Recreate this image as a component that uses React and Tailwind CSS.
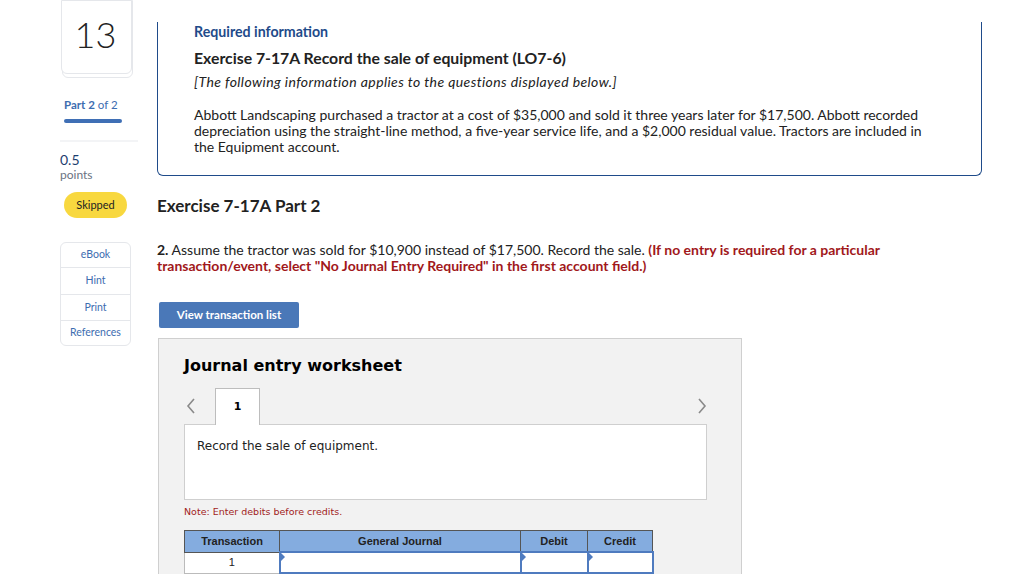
import React from 'react';

const sans = { fontFamily: 'Lato, "Open Sans", Arial, sans-serif' };
const verdana = { fontFamily: '"DejaVu Sans", Verdana, sans-serif' };

const Sidebar = () => (
  <div className="w-[78px] shrink-0 ml-[60px] flex flex-col" style={sans}>
    {/* question number card */}
    <div className="relative h-[76px] w-[72px]">
      <div className="absolute left-[2px] right-[-1px] top-0 h-[78px] rounded-b-md border border-gray-200 bg-white"></div>
      <div className="absolute left-[1px] right-0 top-0 h-[74px] rounded-b-md border border-gray-200 bg-white flex items-center justify-center">
        <span className="text-[36px] font-light text-[#222] leading-none mt-[-6px] mr-[2px]">13</span>
      </div>
    </div>
    <div className="mt-[20px] pl-[4px] text-[11.5px] text-[#3d6db0]">
      <span className="font-bold">Part 2</span> of 2
    </div>
    <div className="mt-[6px] ml-[4px] h-[4px] w-[58px] rounded-full bg-[#3f6fb5]"></div>
    <div className="mt-[17px] h-[2px] w-[78px] bg-gray-100"></div>
    <div className="mt-[11px] text-[14px] leading-[14px] text-[#1d3e70]">0.5</div>
    <div className="text-[12px] leading-[15px] text-gray-500">points</div>
    <div className="mt-[10px] ml-[4px] w-[63px] h-[26px] rounded-full bg-[#f8d83f] flex items-center justify-center text-[11px] text-[#222]">
      Skipped
    </div>
    <div className="mt-[24px] w-[71px] rounded-md border border-gray-200 text-[10.5px] text-[#3d6db0] flex flex-col">
      <div className="h-[25px] flex items-center justify-center border-b border-gray-200">eBook</div>
      <div className="h-[27px] flex items-center justify-center border-b border-gray-200">Hint</div>
      <div className="h-[26px] flex items-center justify-center border-b border-gray-200">Print</div>
      <div className="h-[24px] flex items-center justify-center">References</div>
    </div>
  </div>
);

const Chevron = ({ dir }) => (
  <svg width="10" height="16" viewBox="0 0 10 16" fill="none" stroke="#8a8a8a" strokeWidth="1.6">
    {dir === 'left' ? <path d="M8 1 L2 8 L8 15" /> : <path d="M2 1 L8 8 L2 15" />}
  </svg>
);

const Arrow = () => (
  <span className="absolute left-0 top-0 w-0 h-0 border-t-[4px] border-t-transparent border-b-[4px] border-b-transparent border-l-[4px] border-l-[#4f7bbf]"></span>
);

const Worksheet = () => (
  <div className="mt-[10px] ml-[1px] w-[584px] h-[240px] bg-[#f2f2f2] border border-[#cfcfcf] border-b-0 pl-[25px] pr-[34px] pt-[17px]" style={verdana}>
    <h2 className="text-[16px] font-bold text-black leading-[20px]">Journal entry worksheet</h2>
    <div className="mt-[12px] flex items-end h-[36px]">
      <div className="w-[31px] h-full flex items-center pl-[2px]"><Chevron dir="left" /></div>
      <div className="w-[45px] h-[37px] bg-white border border-[#bdbdbd] border-b-0 flex items-center justify-center text-[11px] font-bold relative z-10 mb-[-1px]">1</div>
      <div className="flex-1 h-full flex items-center justify-end"><Chevron dir="right" /></div>
    </div>
    <div className="w-[523px] h-[76px] bg-white border border-[#cfcfcf] px-[12px] pt-[12px] text-[12px] text-[#222]">
      Record the sale of equipment.
    </div>
    <div className="mt-[5px] text-[9.5px] text-[#a12222]">Note: Enter debits before credits.</div>
    <table className="mt-[10px] border-collapse text-[11px]" style={{ fontFamily: 'Arial, "Liberation Sans", sans-serif' }}>
      <thead>
        <tr className="bg-[#84acdf] h-[22px]">
          <th className="w-[95px] border border-[#555] font-bold text-[#222]">Transaction</th>
          <th className="w-[241px] border border-[#555] font-bold text-[#222]">General Journal</th>
          <th className="w-[67px] border border-[#555] font-bold text-[#222]">Debit</th>
          <th className="w-[65px] border border-[#555] font-bold text-[#222]">Credit</th>
        </tr>
      </thead>
      <tbody>
        <tr className="h-[21px] bg-white">
          <td className="border border-[#bbb] text-center text-[#222]">1</td>
          <td className="border-2 border-[#4f7bbf] relative"><Arrow /></td>
          <td className="border-2 border-[#4f7bbf] relative"><Arrow /></td>
          <td className="border-2 border-[#4f7bbf] relative"><Arrow /></td>
        </tr>
      </tbody>
    </table>
  </div>
);

export default function App() {
  return (
    <div className="w-[1024px] h-[574px] overflow-hidden bg-white flex">
      <Sidebar />
      <div className="ml-[19px] flex flex-col" style={sans}>
        {/* required information box */}
        <div className="mt-[22px] w-[825px] h-[157px] border border-t-0 border-[#1f4b8a] rounded-b-md pl-[36px] pr-[40px] pt-[1px]">
          <div className="text-[14.2px] font-bold text-[#1f4b8a] leading-[18px]">Required information</div>
          <div className="mt-[7px] text-[15.8px] font-bold text-[#222] leading-[20px]">Exercise 7-17A Record the sale of equipment (LO7-6)</div>
          <div className="mt-[5px] text-[14px] italic tracking-[0.4px] text-[#222] leading-[18px]">[The following information applies to the questions displayed below.]</div>
          <p className="mt-[16px] text-[14px] text-[#222] leading-[16px]">
            Abbott Landscaping purchased a tractor at a cost of $35,000 and sold it three years later for $17,500. Abbott recorded depreciation using the straight-line method, a five-year service life, and a $2,000 residual value. Tractors are included in the Equipment account.
          </p>
        </div>
        <h1 className="mt-[20px] text-[17px] font-bold text-[#222] leading-[20px]">Exercise 7-17A Part 2</h1>
        <p className="mt-[26px] text-[14px] leading-[16px] text-[#222] w-[760px]">
          <span className="font-bold">2.</span> Assume the tractor was sold for $10,900 instead of $17,500. Record the sale.{' '}
          <span className="font-bold text-[#a1181b]">(If no entry is required for a particular transaction/event, select "No Journal Entry Required" in the first account field.)</span>
        </p>
        <button className="mt-[28px] ml-[2px] w-[140px] h-[27px] bg-[#4a78b8] rounded-[2px] text-white text-[11.5px] font-bold self-start">
          View transaction list
        </button>
        <Worksheet />
      </div>
    </div>
  );
}
